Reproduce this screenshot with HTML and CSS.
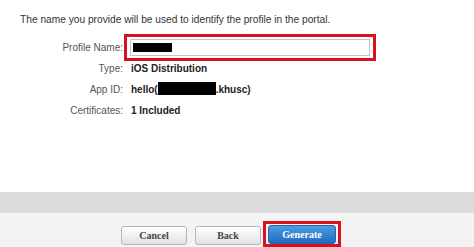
FILE: index.html
```html
<!DOCTYPE html>
<html lang="en">
<head>
    <meta charset="UTF-8">
    <title>Name this profile</title>
    <link rel="stylesheet" href="styles.css">
</head>
<body>
    <div class="content">
        <p class="intro">The name you provide will be used to identify the profile in the portal.</p>

        <div class="form">
            <div class="row row-input">
                <label class="label" for="profileName">Profile Name:</label>
                <div class="highlight">
                    <div class="field"><span class="redact redact-name"></span></div>
                </div>
            </div>
            <div class="row">
                <span class="label">Type:</span>
                <span class="value">iOS Distribution</span>
            </div>
            <div class="row">
                <span class="label">App ID:</span>
                <span class="value">hello(<span class="redact redact-id"></span>.khusc)</span>
            </div>
            <div class="row">
                <span class="label">Certificates:</span>
                <span class="value">1 Included</span>
            </div>
        </div>
    </div>

    <div class="band"></div>

    <div class="footer">
        <button class="btn">Cancel</button>
        <button class="btn">Back</button>
        <div class="highlight highlight-btn">
            <button class="btn btn-primary">Generate</button>
        </div>
    </div>
</body>
</html>
```

FILE: styles.css
```css
body {
    margin: 0;
    font-family: "Liberation Sans", Arial, sans-serif;
    font-size: 10px;
    color: #333;
    background: #fff;
}
.content {
    height: 192px;
    padding-left: 20px;
    box-sizing: border-box;
    overflow: hidden;
}
.intro {
    margin: 0;
    padding-top: 13px;
    line-height: 14px;
    font-size: 10.2px;
}
.form {
    margin-top: 7px;
}
.row {
    display: grid;
    grid-template-columns: 103px 1fr;
    column-gap: 8px;
    align-items: center;
    height: 21px;
}
.row-input {
    height: 27px;
    margin-bottom: -3px;
}
.label {
    text-align: right;
    color: #555;
}
.value {
    font-weight: bold;
    color: #222;
}
.highlight {
    border: 3px solid #d8111e;
    width: 246px;
    height: 21px;
    margin-left: -7px;
    display: flex;
    align-items: center;
    justify-content: center;
}
.field {
    width: 240px;
    height: 17px;
    border: 1px solid #c4c4c4;
    box-sizing: border-box;
    display: flex;
    align-items: center;
    padding-left: 2px;
}
.redact {
    display: inline-block;
    background: #000;
}
.redact-name {
    width: 39px;
    height: 9px;
}
.redact-id {
    width: 58px;
    height: 13px;
    vertical-align: middle;
    margin-top: -2px;
}
.band {
    height: 21px;
    background: #dcdcdc;
}
.footer {
    background: #f3f3f3;
    height: 34px;
    display: flex;
    align-items: flex-end;
    padding-left: 121px;
    gap: 8px;
}
.btn {
    width: 66px;
    height: 19px;
    margin-bottom: 2px;
    border: 1px solid #b5b5b5;
    border-radius: 3px;
    background: linear-gradient(to bottom, #ffffff, #e2e2e2);
    font-family: "Liberation Serif", serif;
    font-weight: bold;
    font-size: 10px;
    color: #444;
    padding: 0;
}
.highlight-btn {
    width: 72px;
    height: 19px;
    margin-left: -6px;
    padding: 1px 0 0;
}
.btn-primary {
    width: 68px;
    margin: 0;
    border-color: #2b64a8;
    background: linear-gradient(to bottom, #4d9be0, #1f6cc0);
    color: #fff;
}
```
